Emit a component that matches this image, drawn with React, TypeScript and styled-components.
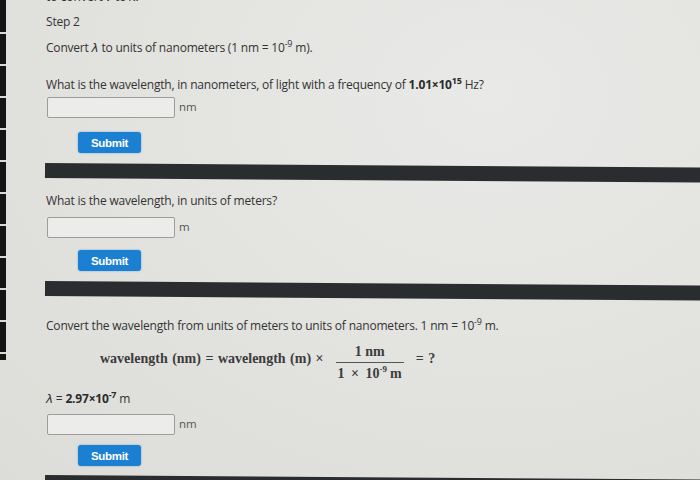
import React from "react";
import styled, { createGlobalStyle } from "styled-components";

const GlobalStyle = createGlobalStyle`
  html, body {
    margin: 0;
    padding: 0;
    background: #e2e2df;
  }
`;

type AnswerProps = { unit: string };

function AnswerRow({ unit }: AnswerProps) {
  return (
    <Row>
      <AnswerInput type="text" aria-label={unit} />
      <Unit>{unit}</Unit>
    </Row>
  );
}

export default function App() {
  return (
    <Screen>
      <GlobalStyle />
      <Bezel />
      <Page>
        <CutLine>
          to convert <i>ν</i> to <i>λ</i>.
        </CutLine>

        <Text $top={7}>Step 2</Text>
        <Text $top={8}>
          Convert <Lambda>λ</Lambda> to units of nanometers (1 nm = 10<sup>-9</sup> m).
        </Text>

        <Text $top={19}>
          What is the wavelength, in nanometers, of light with a frequency of{" "}
          <b>
            1.01×10<sup>15</sup>
          </b>{" "}
          Hz?
        </Text>
        <Gap $h={3} />
        <AnswerRow unit="nm" />
        <SubmitButton $top={14}>Submit</SubmitButton>
        <Divider $top={10} />

        <Text $top={14}>What is the wavelength, in units of meters?</Text>
        <Gap $h={7} />
        <AnswerRow unit="m" />
        <SubmitButton $top={12}>Submit</SubmitButton>
        <Divider $top={10} />

        <Text $top={21}>
          Convert the wavelength from units of meters to units of nanometers. 1 nm = 10
          <sup>-9</sup> m.
        </Text>
        <Formula>
          <MathText>wavelength (nm) = wavelength (m) ×</MathText>
          <Fraction>
            <Numer>1 nm</Numer>
            <Rule />
            <Denom>
              1 × 10<sup>-9</sup>m
            </Denom>
          </Fraction>
          <MathText>= ?</MathText>
        </Formula>

        <Text $top={8}>
          <Lambda>λ</Lambda> ={" "}
          <b>
            2.97×10<sup>-7</sup>
          </b>{" "}
          m
        </Text>
        <Gap $h={6} />
        <AnswerRow unit="nm" />
        <SubmitButton $top={10}>Submit</SubmitButton>
        <Divider $top={9} />
      </Page>
    </Screen>
  );
}

const Screen = styled.div`
  display: flex;
  align-items: flex-start;
  width: 700px;
  height: 480px;
  overflow: hidden;
  background: radial-gradient(ellipse at 70% 20%, #e9e9e7 0%, #e2e2df 55%, #dcdcd9 100%);
  font-family: "Open Sans", "Liberation Sans", sans-serif;
  color: #333;
`;

const Bezel = styled.div`
  flex: 0 0 6px;
  height: 360px;
  background: repeating-linear-gradient(
    to bottom,
    #141414 0px,
    #141414 30px,
    #d9d9d9 30px,
    #d9d9d9 32px
  );
  background-position: 0 2px;
`;

const Page = styled.div`
  flex: 1;
  display: flex;
  flex-direction: column;
  padding-left: 40px;
  min-width: 0;

  & > * {
    flex-shrink: 0;
  }
`;

const CutLine = styled.div`
  margin-top: -12px;
  font-size: 12px;
  line-height: 18px;
`;

const Text = styled.div<{ $top: number }>`
  margin-top: ${(p) => p.$top}px;
  font-size: 12px;
  line-height: 18px;
  letter-spacing: -0.2px;
  white-space: nowrap;

  sup {
    font-size: 9px;
    line-height: 0;
    vertical-align: 5px;
  }

  b {
    font-weight: 700;
    color: #2b2b2b;
  }
`;

const Lambda = styled.i`
  font-family: "DejaVu Sans", sans-serif;
  font-size: 12px;
`;

const Gap = styled.div<{ $h: number }>`
  height: ${(p) => p.$h}px;
`;

const Row = styled.div`
  display: flex;
  align-items: center;
  gap: 4px;
`;

const AnswerInput = styled.input`
  box-sizing: border-box;
  width: 128px;
  height: 21px;
  margin: 0 0 0 1px;
  border: 1px solid #9c9c9a;
  border-radius: 2px;
  background: #ececea;
  outline: none;
`;

const Unit = styled.span`
  font-size: 11.5px;
  color: #555;
  margin-top: -3px;
`;

const SubmitButton = styled.button<{ $top: number }>`
  align-self: flex-start;
  margin: ${(p) => p.$top}px 0 0 32px;
  width: 63px;
  height: 21px;
  padding: 0;
  border: none;
  border-radius: 3px;
  background: #1c80d2;
  box-shadow: 0 0 2px rgba(40, 130, 210, 0.6);
  color: #fff;
  font-family: "Liberation Sans", Arial, sans-serif;
  font-size: 11.5px;
  font-weight: 700;
  letter-spacing: -0.3px;
`;

const Divider = styled.div<{ $top: number }>`
  margin: ${(p) => p.$top}px -20px 0 -1px;
  height: 15px;
  background: #2a2d30;
  transform: rotate(0.4deg);
  transform-origin: left center;
`;

const Formula = styled.div`
  display: flex;
  align-items: center;
  gap: 12px;
  padding-left: 54px;
  color: #3c3c3c;
`;

const MathText = styled.span`
  font-family: "Liberation Serif", "Times New Roman", serif;
  font-size: 14px;
  font-weight: 700;
  line-height: 18px;
  white-space: nowrap;
  word-spacing: 1px;
`;

const Fraction = styled.div`
  margin-top: 9px;
  display: flex;
  flex-direction: column;
  align-items: center;
  padding: 0 2px;
  font-family: "Liberation Serif", "Times New Roman", serif;
  font-size: 14px;
  font-weight: 700;
`;

const Numer = styled.span`
  line-height: 16px;
`;

const Rule = styled.div`
  align-self: stretch;
  height: 1px;
  margin: 2px -2px 3px;
  background: #555;
`;

const Denom = styled.span`
  line-height: 16px;
  white-space: nowrap;
  word-spacing: 3px;

  sup {
    font-size: 9px;
    line-height: 0;
    vertical-align: 6px;
    margin-right: 3px;
  }
`;
